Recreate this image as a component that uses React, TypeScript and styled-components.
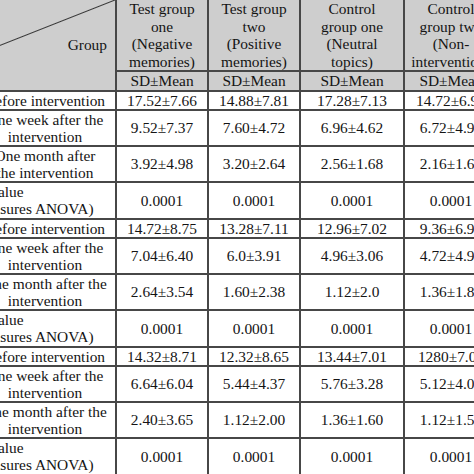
import React from 'react';
import styled, { createGlobalStyle } from 'styled-components';

const GlobalStyle = createGlobalStyle`
  html, body {
    margin: 0;
    padding: 0;
    background: #fff;
  }
  body {
    font-family: "Liberation Serif", "Times New Roman", serif;
  }
`;

const Frame = styled.div`
  width: 474px;
  height: 474px;
  overflow: hidden;
  background: #fff;
`;

const Table = styled.table`
  border-collapse: collapse;
  table-layout: fixed;
  width: 612px;
  margin: -2px 0 0 -115px;
  font-size: 15.4px;
  color: #141414;
`;

const Row = styled.tr<{ $h: number }>`
  height: ${(p) => p.$h}px;
`;

const HeadCell = styled.th`
  border: 2px solid #474747;
  background: #cecece;
  font-weight: normal;
  line-height: 17.5px;
  padding: 0;
  text-align: center;
  vertical-align: middle;
`;

const CornerCell = styled(HeadCell)`
  text-align: right;
  padding-right: 8px;
  background:
    linear-gradient(
      to bottom right,
      transparent calc(50% - 1px),
      #363636 50%,
      transparent calc(50% + 1px)
    ),
    #cecece;
`;

const Cell = styled.td`
  border: 2px solid #474747;
  background: #fff;
  line-height: 17px;
  padding: 0;
  text-align: center;
  vertical-align: middle;
  white-space: nowrap;
`;

const LabelCell = styled(Cell)`
  white-space: normal;
`;

type Block = {
  before: string[];
  week: string[];
  month: string[];
  monthLabel: React.ReactNode;
};

const blocks: Block[] = [
  {
    before: ['17.52±7.66', '14.88±7.81', '17.28±7.13', '14.72±6.93'],
    week: ['9.52±7.37', '7.60±4.72', '6.96±4.62', '6.72±4.92'],
    month: ['3.92±4.98', '3.20±2.64', '2.56±1.68', '2.16±1.62'],
    monthLabel: (
      <>
        One month after
        <br />
        the intervention
      </>
    ),
  },
  {
    before: ['14.72±8.75', '13.28±7.11', '12.96±7.02', '9.36±6.94'],
    week: ['7.04±6.40', '6.0±3.91', '4.96±3.06', '4.72±4.91'],
    month: ['2.64±3.54', '1.60±2.38', '1.12±2.0', '1.36±1.80'],
    monthLabel: (
      <>
        One month after the
        <br />
        intervention
      </>
    ),
  },
  {
    before: ['14.32±8.71', '12.32±8.65', '13.44±7.01', '1280±7.03'],
    week: ['6.64±6.04', '5.44±4.37', '5.76±3.28', '5.12±4.04'],
    month: ['2.40±3.65', '1.12±2.00', '1.36±1.60', '1.12±1.52'],
    monthLabel: (
      <>
        One month after the
        <br />
        intervention
      </>
    ),
  },
];

const groups = [
  ['Test group', 'one', '(Negative', 'memories)'],
  ['Test group', 'two', '(Positive', 'memories)'],
  ['Control', 'group one', '(Neutral', 'topics)'],
  ['Control', 'group two', '(Non-', 'intervention)'],
];

const Lines: React.FC<{ lines: string[] }> = ({ lines }) => (
  <>
    {lines.map((l, i) => (
      <React.Fragment key={i}>
        {i > 0 && <br />}
        {l}
      </React.Fragment>
    ))}
  </>
);

const App: React.FC = () => {
  return (
    <Frame>
      <GlobalStyle />
      <Table>
        <colgroup>
          <col style={{ width: 88 }} />
          <col style={{ width: 142 }} />
          <col style={{ width: 92 }} />
          <col style={{ width: 92 }} />
          <col style={{ width: 104 }} />
          <col style={{ width: 94 }} />
        </colgroup>
        <thead>
          <Row $h={72}>
            <CornerCell colSpan={2} rowSpan={2}>
              Group
            </CornerCell>
            {groups.map((g, i) => (
              <HeadCell key={i}>
                <Lines lines={g} />
              </HeadCell>
            ))}
          </Row>
          <Row $h={18}>
            {groups.map((_, i) => (
              <HeadCell key={i}>SD±Mean</HeadCell>
            ))}
          </Row>
        </thead>
        <tbody>
          {blocks.map((b, bi) => (
            <React.Fragment key={bi}>
              <Row $h={19}>
                <Cell rowSpan={3} />
                <LabelCell>Before intervention</LabelCell>
                {b.before.map((v, i) => (
                  <Cell key={i}>{v}</Cell>
                ))}
              </Row>
              <Row $h={36}>
                <LabelCell>
                  One week after the
                  <br />
                  intervention
                </LabelCell>
                {b.week.map((v, i) => (
                  <Cell key={i}>{v}</Cell>
                ))}
              </Row>
              <Row $h={36}>
                <LabelCell>{b.monthLabel}</LabelCell>
                {b.month.map((v, i) => (
                  <Cell key={i}>{v}</Cell>
                ))}
              </Row>
              <Row $h={37}>
                <LabelCell colSpan={2}>
                  P value
                  <br />
                  (Repeated measures ANOVA)
                </LabelCell>
                {[0, 1, 2, 3].map((i) => (
                  <Cell key={i}>0.0001</Cell>
                ))}
              </Row>
            </React.Fragment>
          ))}
        </tbody>
      </Table>
    </Frame>
  );
};

export default App;
